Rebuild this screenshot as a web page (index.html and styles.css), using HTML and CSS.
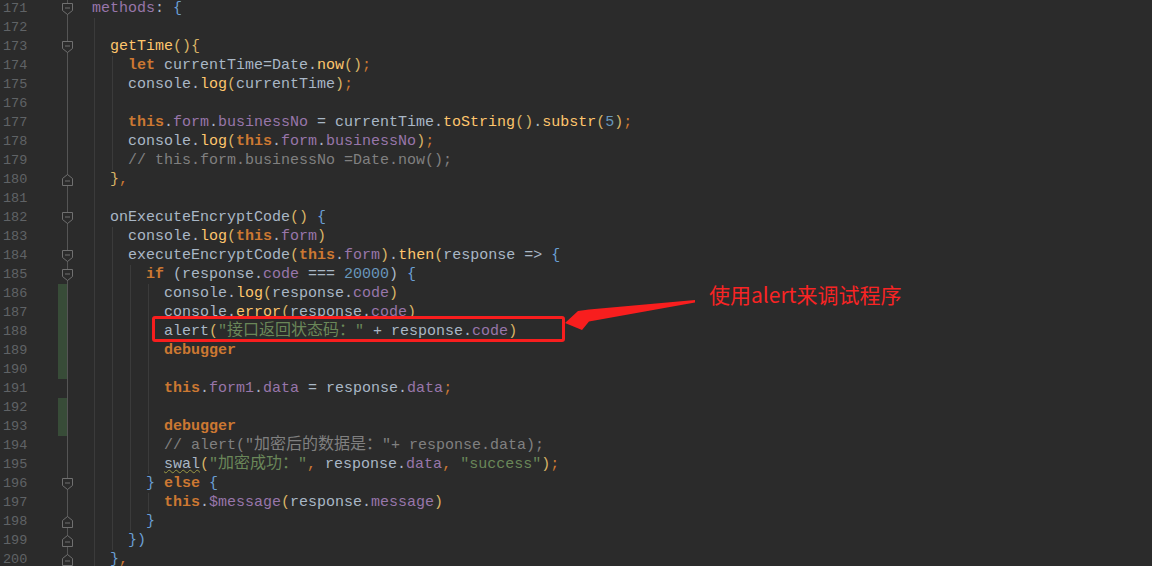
FILE: index.html
```html
<!DOCTYPE html>
<html lang="zh-CN">

<head>
    <meta charset="UTF-8">
    <title>Editor - methods</title>
    <link rel="stylesheet" href="styles.css">
</head>

<body>
    <div class="editor">
        <div class="line"><span class="num">171</span><span class="mark"></span><span class="fold"><svg class="fm" width="11" height="12" viewBox="0 0 11 12"><path d="M0.5 0.5H10.5V7.5L5.5 11.5L0.5 7.5Z"/><path d="M3 5H8"/></svg></span><span class="code"><span class="p">methods</span>: <span class="bb">{</span></span></div>
        <div class="line"><span class="num">172</span><span class="mark"></span><span class="fold"></span><span class="code"><span class="ind g"></span></span></div>
        <div class="line"><span class="num">173</span><span class="mark"></span><span class="fold"><svg class="fm" width="11" height="12" viewBox="0 0 11 12"><path d="M0.5 0.5H10.5V7.5L5.5 11.5L0.5 7.5Z"/><path d="M3 5H8"/></svg></span><span class="code"><span class="ind g"></span><span class="f">getTime</span><span class="bg">(){</span></span></div>
        <div class="line"><span class="num">174</span><span class="mark"></span><span class="fold"></span><span class="code"><span class="ind g"></span><span class="ind g"></span><span class="k">let</span> currentTime=Date.<span class="f">now</span><span class="bg">()</span><span class="o">;</span></span></div>
        <div class="line"><span class="num">175</span><span class="mark"></span><span class="fold"></span><span class="code"><span class="ind g"></span><span class="ind g"></span>console.<span class="f">log</span><span class="bg">(</span>currentTime<span class="bg">)</span><span class="o">;</span></span></div>
        <div class="line"><span class="num">176</span><span class="mark"></span><span class="fold"></span><span class="code"><span class="ind g"></span><span class="ind g"></span></span></div>
        <div class="line"><span class="num">177</span><span class="mark"></span><span class="fold"></span><span class="code"><span class="ind g"></span><span class="ind g"></span><span class="k">this</span>.<span class="p">form</span>.<span class="p">businessNo</span> = currentTime.<span class="f">toString</span><span class="bg">()</span>.<span class="f">substr</span><span class="bg">(</span><span class="n">5</span><span class="bg">)</span><span class="o">;</span></span></div>
        <div class="line"><span class="num">178</span><span class="mark"></span><span class="fold"></span><span class="code"><span class="ind g"></span><span class="ind g"></span>console.<span class="f">log</span><span class="bg">(</span><span class="k">this</span>.<span class="p">form</span>.<span class="p">businessNo</span><span class="bg">)</span><span class="o">;</span></span></div>
        <div class="line"><span class="num">179</span><span class="mark"></span><span class="fold"></span><span class="code"><span class="ind g"></span><span class="ind g"></span><span class="c">// this.form.businessNo =Date.now();</span></span></div>
        <div class="line"><span class="num">180</span><span class="mark"></span><span class="fold"><svg class="fm" width="11" height="12" viewBox="0 0 11 12"><path d="M0.5 11.5H10.5V4.5L5.5 0.5L0.5 4.5Z"/><path d="M3 7H8"/></svg></span><span class="code"><span class="ind g"></span><span class="bg">}</span><span class="o">,</span></span></div>
        <div class="line"><span class="num">181</span><span class="mark"></span><span class="fold"></span><span class="code"><span class="ind g"></span></span></div>
        <div class="line"><span class="num">182</span><span class="mark"></span><span class="fold"><svg class="fm" width="11" height="12" viewBox="0 0 11 12"><path d="M0.5 0.5H10.5V7.5L5.5 11.5L0.5 7.5Z"/><path d="M3 5H8"/></svg></span><span class="code"><span class="ind g"></span>onExecuteEncryptCode<span class="bg">()</span> <span class="bb">{</span></span></div>
        <div class="line"><span class="num">183</span><span class="mark"></span><span class="fold"></span><span class="code"><span class="ind g"></span><span class="ind g"></span>console.<span class="f">log</span><span class="bg">(</span><span class="k">this</span>.<span class="p">form</span><span class="bg">)</span></span></div>
        <div class="line"><span class="num">184</span><span class="mark"></span><span class="fold"><svg class="fm" width="11" height="12" viewBox="0 0 11 12"><path d="M0.5 0.5H10.5V7.5L5.5 11.5L0.5 7.5Z"/><path d="M3 5H8"/></svg></span><span class="code"><span class="ind g"></span><span class="ind g"></span>executeEncryptCode<span class="bg">(</span><span class="k">this</span>.<span class="p">form</span><span class="bg">)</span>.<span class="f">then</span><span class="bg">(</span>response =&gt; <span class="bb">{</span></span></div>
        <div class="line"><span class="num">185</span><span class="mark"></span><span class="fold"><svg class="fm" width="11" height="12" viewBox="0 0 11 12"><path d="M0.5 0.5H10.5V7.5L5.5 11.5L0.5 7.5Z"/><path d="M3 5H8"/></svg></span><span class="code"><span class="ind g"></span><span class="ind g"></span><span class="ind g"></span><span class="k">if</span> (response.<span class="p">code</span> === <span class="n">20000</span>) <span class="bb">{</span></span></div>
        <div class="line"><span class="num">186</span><span class="mark add"></span><span class="fold"></span><span class="code"><span class="ind g"></span><span class="ind g"></span><span class="ind g"></span><span class="ind g"></span>console.<span class="f">log</span><span class="bg">(</span>response.<span class="p">code</span><span class="bg">)</span></span></div>
        <div class="line"><span class="num">187</span><span class="mark add"></span><span class="fold"></span><span class="code"><span class="ind g"></span><span class="ind g"></span><span class="ind g"></span><span class="ind g"></span>console.<span class="f">error</span><span class="bg">(</span>response.<span class="p">code</span><span class="bg">)</span></span></div>
        <div class="line"><span class="num">188</span><span class="mark add"></span><span class="fold"></span><span class="code"><span class="ind g"></span><span class="ind g"></span><span class="ind g"></span><span class="ind g"></span>alert<span class="bg">(</span><span class="s">"<span class="cjk">接口返回状态码：</span>"</span> + response.<span class="p">code</span><span class="bg">)</span></span></div>
        <div class="line"><span class="num">189</span><span class="mark add"></span><span class="fold"></span><span class="code"><span class="ind g"></span><span class="ind g"></span><span class="ind g"></span><span class="ind g"></span><span class="k">debugger</span></span></div>
        <div class="line"><span class="num">190</span><span class="mark add"></span><span class="fold"></span><span class="code"><span class="ind g"></span><span class="ind g"></span><span class="ind g"></span><span class="ind g"></span></span></div>
        <div class="line"><span class="num">191</span><span class="mark"></span><span class="fold"></span><span class="code"><span class="ind g"></span><span class="ind g"></span><span class="ind g"></span><span class="ind g"></span><span class="k">this</span>.<span class="p">form1</span>.<span class="p">data</span> = response.<span class="p">data</span><span class="o">;</span></span></div>
        <div class="line"><span class="num">192</span><span class="mark add"></span><span class="fold"></span><span class="code"><span class="ind g"></span><span class="ind g"></span><span class="ind g"></span><span class="ind g"></span></span></div>
        <div class="line"><span class="num">193</span><span class="mark add"></span><span class="fold"></span><span class="code"><span class="ind g"></span><span class="ind g"></span><span class="ind g"></span><span class="ind g"></span><span class="k">debugger</span></span></div>
        <div class="line"><span class="num">194</span><span class="mark"></span><span class="fold"></span><span class="code"><span class="ind g"></span><span class="ind g"></span><span class="ind g"></span><span class="ind g"></span><span class="c">// alert("<span class="cjk">加密后的数据是：</span>"+ response.data);</span></span></div>
        <div class="line"><span class="num">195</span><span class="mark"></span><span class="fold"></span><span class="code"><span class="ind g"></span><span class="ind g"></span><span class="ind g"></span><span class="ind g"></span><span class="warn">swal</span><span class="bg">(</span><span class="s">"<span class="cjk">加密成功：</span>"</span><span class="o">,</span> response.<span class="p">data</span><span class="o">,</span> <span class="s">"success"</span><span class="bg">)</span><span class="o">;</span></span></div>
        <div class="line"><span class="num">196</span><span class="mark"></span><span class="fold"><svg class="fm" width="11" height="12" viewBox="0 0 11 12"><path d="M0.5 0.5H10.5V7.5L5.5 11.5L0.5 7.5Z"/><path d="M3 5H8"/></svg></span><span class="code"><span class="ind g"></span><span class="ind g"></span><span class="ind g"></span><span class="bb">}</span> <span class="k">else</span> <span class="bb">{</span></span></div>
        <div class="line"><span class="num">197</span><span class="mark"></span><span class="fold"></span><span class="code"><span class="ind g"></span><span class="ind g"></span><span class="ind g"></span><span class="ind g"></span><span class="k">this</span>.<span class="p">$message</span><span class="bg">(</span>response.<span class="p">message</span><span class="bg">)</span></span></div>
        <div class="line"><span class="num">198</span><span class="mark"></span><span class="fold"><svg class="fm" width="11" height="12" viewBox="0 0 11 12"><path d="M0.5 11.5H10.5V4.5L5.5 0.5L0.5 4.5Z"/><path d="M3 7H8"/></svg></span><span class="code"><span class="ind g"></span><span class="ind g"></span><span class="ind g"></span><span class="bb">}</span></span></div>
        <div class="line"><span class="num">199</span><span class="mark"></span><span class="fold"><svg class="fm" width="11" height="12" viewBox="0 0 11 12"><path d="M0.5 11.5H10.5V4.5L5.5 0.5L0.5 4.5Z"/><path d="M3 7H8"/></svg></span><span class="code"><span class="ind g"></span><span class="ind g"></span><span class="bb">})</span></span></div>
        <div class="line"><span class="num">200</span><span class="mark"></span><span class="fold"><svg class="fm" width="11" height="12" viewBox="0 0 11 12"><path d="M0.5 11.5H10.5V4.5L5.5 0.5L0.5 4.5Z"/><path d="M3 7H8"/></svg></span><span class="code"><span class="ind g"></span><span class="bb">}</span><span class="o">,</span></span></div>
    </div>

    <!-- annotation drawn over the screenshot -->
    <div class="note-box"></div>
    <svg class="note-arrow" width="1152" height="566" viewBox="0 0 1152 566">
        <polygon points="695,300 589,309.5 578,311 565,323 582,330 589,321.5 695,302.5" />
    </svg>
    <div class="note-label">使用alert来调试程序</div>
</body>

</html>
```

FILE: styles.css
```css
body {
    margin: 0;
    background-color: #2b2b2b;
    font-family: "Liberation Mono", monospace;
    position: relative;
    height: 566px;
    overflow: hidden;
}

.editor {
    margin-top: -1px;
}

.line {
    display: flex;
    height: 19px;
    line-height: 19px;
}

.num {
    width: 55px;
    padding-left: 3px;
    font-size: 13.5px;
    color: #606366;
}

.mark {
    width: 9px;
}

.mark.add {
    background-color: #384c38;
}

.fold {
    width: 24px;
    border-left: 1px solid #555555;
    position: relative;
}

.fold .fm {
    position: absolute;
    left: -6px;
    top: 4px;
}

.fm path {
    fill: #2b2b2b;
    stroke: #707070;
    stroke-width: 1;
}

.code {
    white-space: pre;
    font-size: 15px;
    color: #a9b7c6;
    height: 19px;
}

.ind {
    display: inline-block;
    width: 18px;
    height: 19px;
    vertical-align: top;
}

.ind.g {
    background: linear-gradient(#3b3b3b, #3b3b3b) no-repeat 2px 0 / 1px 100%;
}

.k {
    color: #cc7832;
    font-weight: bold;
}

.o {
    color: #cc7832;
}

.p {
    color: #9876aa;
}

.f {
    color: #ffc66d;
}

.s {
    color: #6a8759;
}

.n {
    color: #6897bb;
}

.c {
    color: #808080;
}

.bg {
    color: #d9b466;
}

.bb {
    color: #6a9fd4;
}

.cjk {
    font-family: "Noto Sans CJK SC", sans-serif;
    font-size: 16px;
    line-height: 10px;
}

.warn {
    text-decoration: underline wavy #9a9a45;
    text-underline-offset: 1px;
    text-decoration-thickness: 1px;
}

.note-box {
    position: absolute;
    left: 152px;
    top: 316px;
    width: 407px;
    height: 20px;
    border: 3px solid #f81e1e;
    border-radius: 3px;
}

.note-arrow {
    position: absolute;
    left: 0;
    top: 0;
    pointer-events: none;
}

.note-arrow polygon {
    fill: #f81e1e;
}

.note-label {
    position: absolute;
    left: 709px;
    top: 280px;
    font-family: "Noto Sans CJK SC", sans-serif;
    font-size: 21px;
    line-height: 28px;
    color: #f82424;
}
```
